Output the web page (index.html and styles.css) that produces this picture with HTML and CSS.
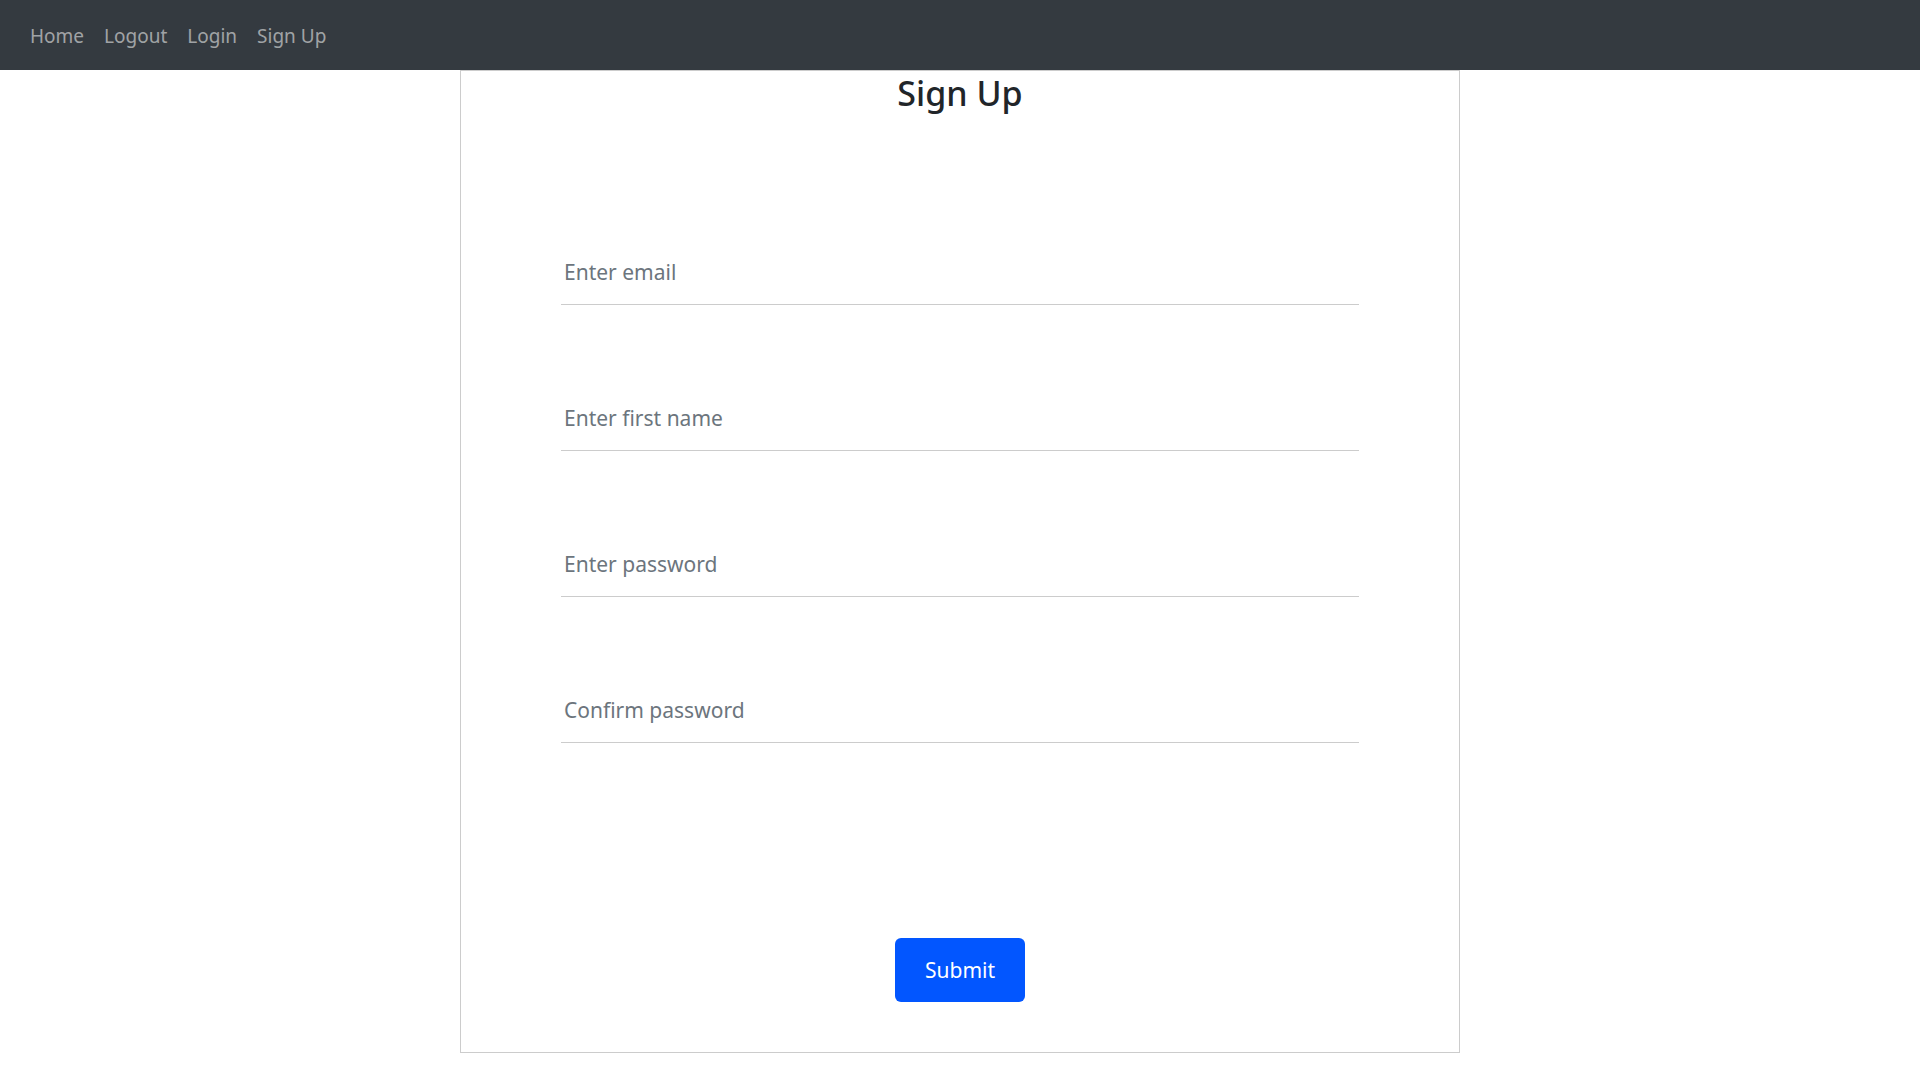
FILE: index.html
```html
<!DOCTYPE html>
<html lang="en">
<head>
<meta charset="utf-8">
<title>Sign Up</title>
<link rel="stylesheet" href="styles.css">
</head>
<body>
<nav class="navbar">
  <a class="nav-link" href="#">Home</a>
  <a class="nav-link" href="#">Logout</a>
  <a class="nav-link" href="#">Login</a>
  <a class="nav-link" href="#">Sign Up</a>
</nav>
<main class="card">
  <h3 class="title">Sign Up</h3>
  <form class="fields">
    <input class="field" type="email" placeholder="Enter email">
    <input class="field" type="text" placeholder="Enter first name">
    <input class="field" type="password" placeholder="Enter password">
    <input class="field" type="password" placeholder="Confirm password">
    <div class="actions">
      <button class="btn-submit" type="button">Submit</button>
    </div>
  </form>
</main>
</body>
</html>
```
FILE: styles.css
```css
* { box-sizing: border-box; }
html, body {
  margin: 0;
  padding: 0;
  background: #fff;
  font-family: "Noto Sans", "Open Sans", sans-serif;
  color: #212529;
}
.navbar {
  display: flex;
  align-items: center;
  height: 70px;
  padding: 2px 20px 0 20px;
  background: #343a40;
}
.nav-link {
  padding: 10px;
  font-size: 19px;
  line-height: 30px;
  color: rgba(255, 255, 255, 0.55);
  text-decoration: none;
}
.card {
  width: 1000px;
  margin: 0 auto;
  border: 1px solid #cccccc;
  padding-bottom: 50px;
  display: flex;
  flex-direction: column;
  align-items: center;
}
.title {
  margin: 1px 0 0 0;
  font-size: 34px;
  font-weight: 500;
  line-height: 42px;
  color: #212529;
}
.fields {
  width: 798px;
  margin-top: 127px;
  display: flex;
  flex-direction: column;
}
.field {
  display: block;
  width: 100%;
  height: 64px;
  margin: 0 0 82px 0;
  padding: 0 3px 1px 3px;
  border: none;
  border-bottom: 1px solid #cccccc;
  outline: none;
  font-family: inherit;
  font-size: 21px;
  color: #212529;
  background: transparent;
}
.field:last-of-type { margin-bottom: 0; }
.field::placeholder { color: #6c757d; opacity: 1; }
.actions {
  display: flex;
  justify-content: center;
  margin-top: 195px;
}
.btn-submit {
  width: 130px;
  height: 64px;
  border: none;
  border-radius: 6px;
  background: #0256ff;
  color: #fff;
  font-family: inherit;
  font-size: 21px;
  cursor: pointer;
}
```
